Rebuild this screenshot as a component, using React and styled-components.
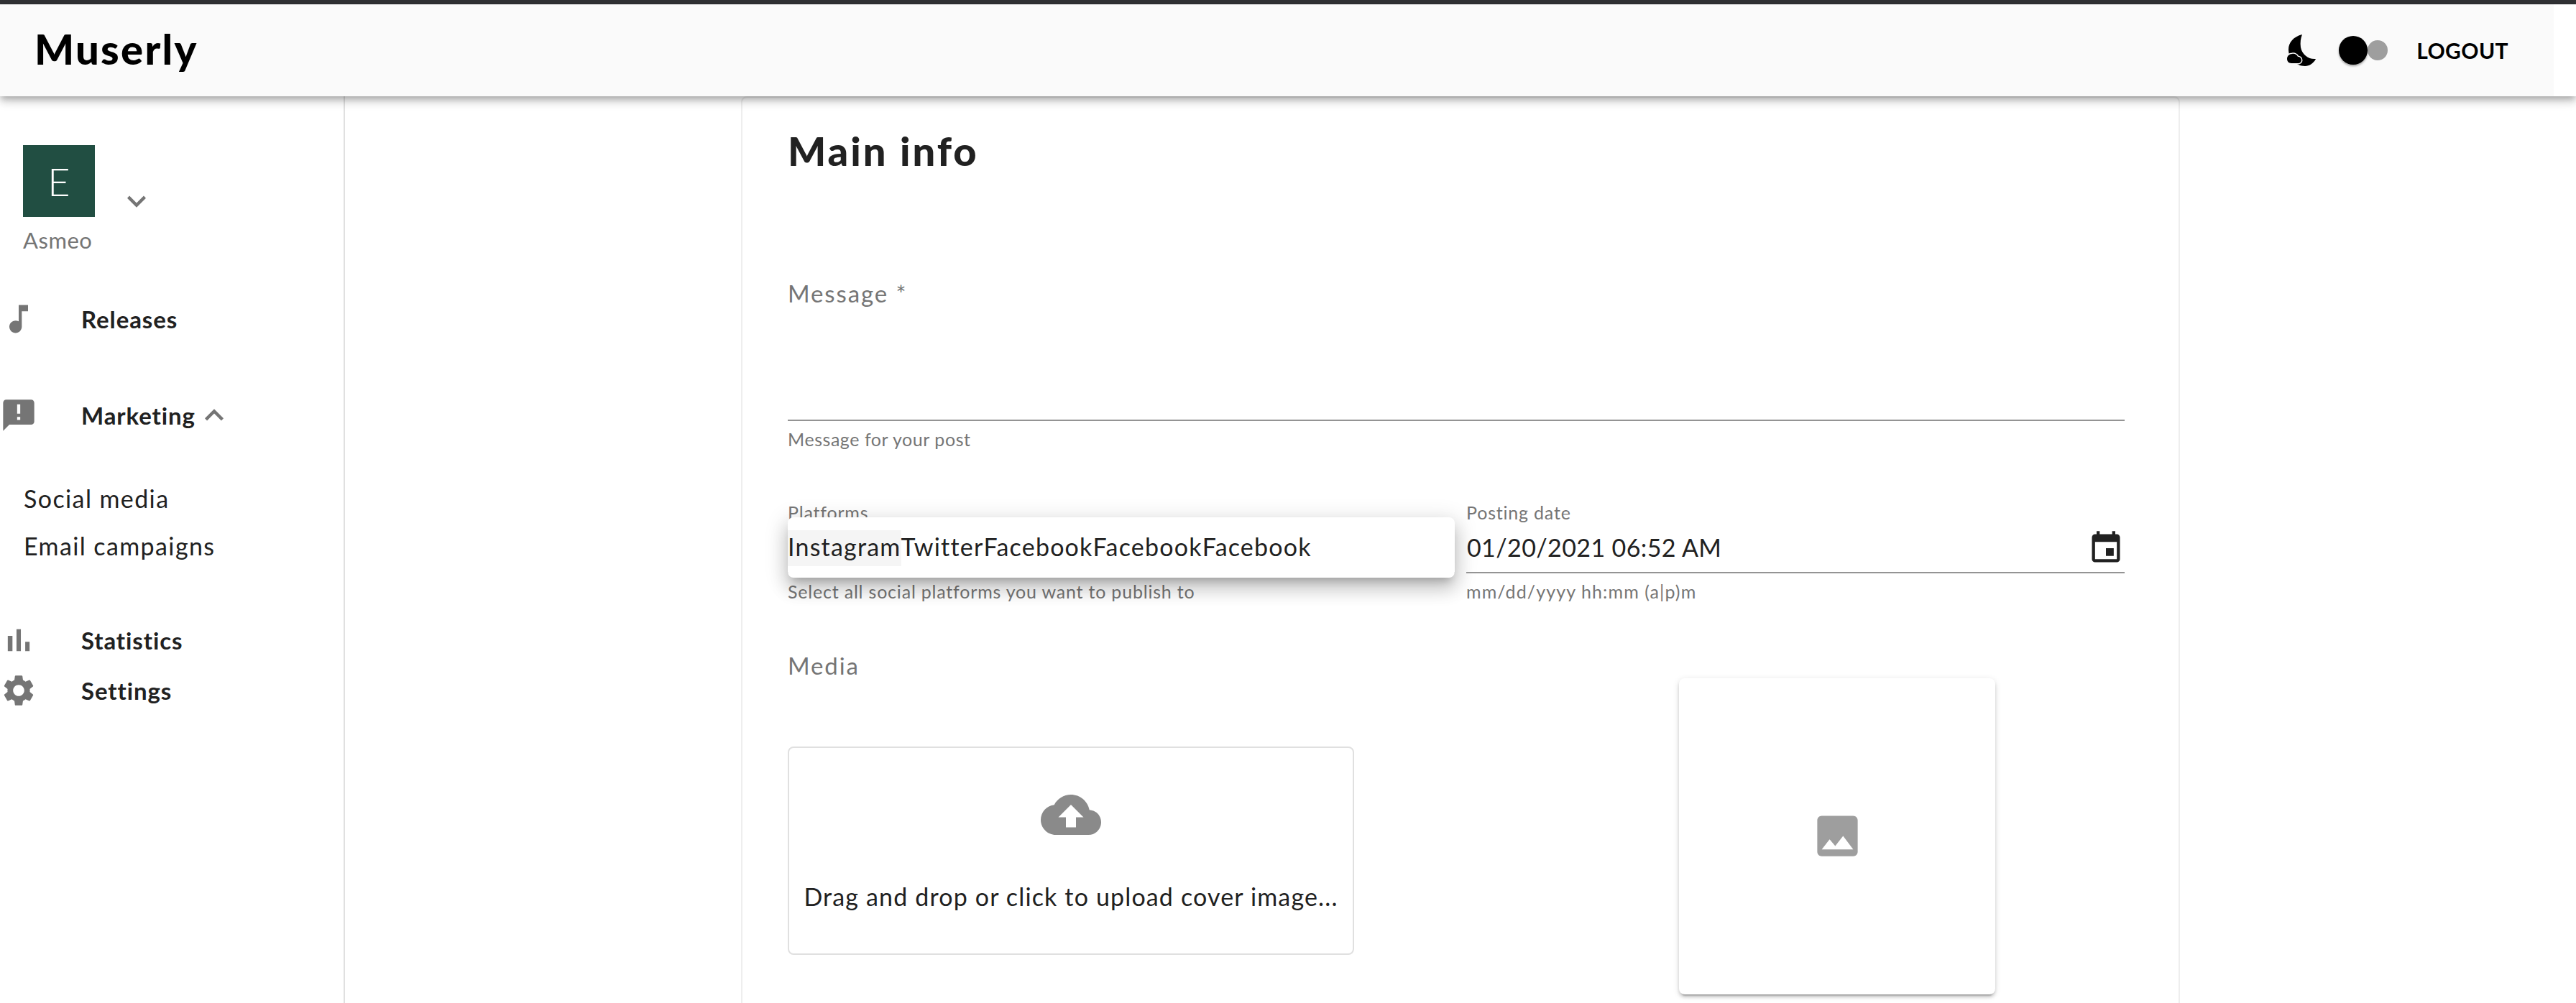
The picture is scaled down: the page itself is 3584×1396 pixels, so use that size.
import React from "react";
import styled, { createGlobalStyle } from "styled-components";

const GlobalStyle = createGlobalStyle`
    html, body {
        margin: 0;
        padding: 0;
        height: 1396px;
        overflow: hidden;
        background: #fff;
        font-family: Lato, "Liberation Sans", sans-serif;
        color: #212121;
    }
`;

const Page = styled.div`
    display: flex;
    flex-direction: column;
    height: 1396px;
    overflow: hidden;
`;

const TopStrip = styled.div`
    height: 6px;
    background: #313235;
    flex: none;
`;

const Header = styled.header`
    flex: none;
    height: 128px;
    background: #fff;
    position: relative;
    z-index: 5;
    box-shadow: 0 4px 8px -2px rgba(0,0,0,.2), 0 8px 10px 0 rgba(0,0,0,.14), 0 2px 20px 0 rgba(0,0,0,.12);
`;

const Toolbar = styled.div`
    width: 3553px;
    height: 128px;
    background: #fafafa;
    display: flex;
    align-items: center;
    padding: 0 63px 0 48px;
    box-sizing: border-box;
`;

const Logo = styled.div`
    font-size: 58px;
    font-weight: 900;
    letter-spacing: 2.3px;
    padding-bottom: 6px;
    color: #000;
    flex: 1;
`;

const MoonIcon = styled.svg`
    width: 40px;
    height: 44px;
    margin-right: 32px;
`;

const Switch = styled.div`
    position: relative;
    width: 68px;
    height: 40px;
    margin-right: 40px;
`;

const SwitchTrack = styled.div`
    position: absolute;
    right: 0;
    top: 6px;
    width: 28px;
    height: 28px;
    border-radius: 14px;
    background: #9e9e9e;
`;

const SwitchThumb = styled.div`
    position: absolute;
    left: 0;
    top: 0;
    width: 40px;
    height: 40px;
    border-radius: 50%;
    background: #000;
    box-shadow: 0 2px 3px rgba(0,0,0,.35);
`;

const LogoutButton = styled.div`
    font-size: 30px;
    font-weight: 700;
    letter-spacing: .4px;
    color: #000;
`;

const Body = styled.div`
    flex: 1;
    display: flex;
    min-height: 0;
`;

const Sidebar = styled.aside`
    width: 480px;
    flex: none;
    box-sizing: border-box;
    border-right: 2px solid #e0e0e0;
    padding-top: 68px;
`;

const AccountRow = styled.div`
    display: flex;
    padding-left: 32px;
    height: 106px;
`;

const Avatar = styled.div`
    width: 100px;
    height: 100px;
    background: #214e42;
    color: #fff;
    display: flex;
    align-items: center;
    justify-content: center;
    font-size: 54px;
    font-weight: 300;
`;

const AccountChevron = styled.div`
    margin: 52px 0 0 32px;
`;

const AccountName = styled.div`
    font-size: 31px;
    line-height: 40px;
    letter-spacing: .5px;
    padding-left: 32px;
    margin-top: 6px;
    color: #757575;
`;

const NavRow = styled.div`
    display: flex;
    align-items: center;
    height: 70px;
    margin-top: ${(p) => p.$top || 0}px;
`;

const NavLabel = styled.div`
    font-size: 33px;
    font-weight: 700;
    letter-spacing: .9px;
    margin-left: 61px;
    color: #212121;
`;

const SubList = styled.div`
    margin-top: 48px;
`;

const SubItem = styled.div`
    font-size: 34px;
    letter-spacing: 1.4px;
    height: 66px;
    line-height: 66px;
    padding-left: 33px;
    color: #212121;
`;

const Main = styled.main`
    flex: 1;
    display: flex;
    justify-content: center;
    min-width: 0;
`;

const Card = styled.section`
    width: 2002px;
    height: 1400px;
    box-sizing: border-box;
    border: 2px solid #eeeeee;
    border-bottom: 0;
    border-radius: 8px 8px 0 0;
    padding: 34px 75px 0 63px;
`;

const Title = styled.h1`
    margin: 0;
    font-size: 56px;
    line-height: 80px;
    font-weight: 900;
    letter-spacing: 3px;
    color: #212121;
`;

const SectionLabel = styled.div`
    font-size: 33px;
    line-height: 44px;
    letter-spacing: 1.9px;
    color: #757575;
    margin-top: ${(p) => p.$top || 0}px;
`;

const MessageInput = styled.div`
    height: 156px;
    box-sizing: border-box;
    border-bottom: 2px solid #949494;
`;

const HelperText = styled.div`
    font-size: 25px;
    line-height: 34px;
    letter-spacing: ${(p) => p.$spacing}px;
    margin-top: 8px;
    color: #757575;
`;

const FieldRow = styled.div`
    display: grid;
    grid-template-columns: 928px 1fr;
    column-gap: 16px;
    margin-top: 68px;
`;

const Field = styled.div`
    position: relative;
`;

const FieldLabel = styled.div`
    font-size: 25px;
    line-height: 34px;
    letter-spacing: .8px;
    color: #757575;
`;

const InputRow = styled.div`
    height: 68px;
    box-sizing: border-box;
    border-bottom: 2px solid #949494;
    display: flex;
    align-items: center;
    justify-content: space-between;
    font-size: 34px;
    color: #212121;
`;

const DateValue = styled.span`
    letter-spacing: .4px;
    margin: 0 0 4px 1px;
`;

const SelectMenu = styled.div`
    position: absolute;
    top: 24px;
    left: 0;
    right: 0;
    height: 84px;
    box-sizing: border-box;
    padding-top: 18px;
    background: #fff;
    border-radius: 8px;
    display: flex;
    align-items: flex-start;
    box-shadow: 0 10px 12px -6px rgba(0,0,0,.2), 0 16px 24px 2px rgba(0,0,0,.14), 0 6px 30px 5px rgba(0,0,0,.12);
`;

const SelectOption = styled.div`
    height: 50px;
    line-height: 46px;
    font-size: 34px;
    letter-spacing: 1.2px;
    color: #212121;
    background: ${(p) => (p.$active ? "#f5f5f5" : "transparent")};
`;

const MediaGrid = styled.div`
    display: grid;
    grid-template-columns: 788px 1fr;
    margin-top: 64px;
`;

const UploadBox = styled.div`
    height: 290px;
    margin-top: 91px;
    box-sizing: border-box;
    border: 2px solid #e0e0e0;
    border-radius: 8px;
    display: flex;
    flex-direction: column;
    align-items: center;
    padding-top: 51px;
`;

const UploadText = styled.div`
    font-size: 34px;
    line-height: 44px;
    letter-spacing: 1.15px;
    margin-top: 50px;
    color: #212121;
`;

const PreviewColumn = styled.div`
    display: flex;
    justify-content: flex-end;
    padding-right: 180px;
`;

const PreviewCard = styled.div`
    width: 440px;
    height: 440px;
    box-sizing: border-box;
    padding-bottom: 2px;
    margin-top: 40px;
    border-radius: 8px;
    background: #fff;
    display: flex;
    align-items: center;
    justify-content: center;
    box-shadow: 0 6px 2px -4px rgba(0,0,0,.2), 0 4px 4px 0 rgba(0,0,0,.14), 0 2px 10px 0 rgba(0,0,0,.12);
`;

const Icon = styled.svg`
    display: block;
    flex: none;
    width: ${(p) => p.$size}px;
    height: ${(p) => p.$size}px;
    fill: ${(p) => p.$color};
`;

const MaterialIcon = ({ d, size = 52, color = "#757575" }) => (
    <Icon viewBox="0 0 24 24" $size={size} $color={color}>
        <path d={d} />
    </Icon>
);

const paths = {
    note: "M12 3v10.55c-.59-.34-1.27-.55-2-.55-2.21 0-4 1.79-4 4s1.79 4 4 4 4-1.79 4-4V7h4V3h-6z",
    announcement: "M20 2H4c-1.1 0-1.99.9-1.99 2L2 22l4-4h14c1.1 0 2-.9 2-2V4c0-1.1-.9-2-2-2zm-7 9h-2V5h2v6zm0 4h-2v-2h2v2z",
    bars: "M5 9.2h3V19H5zM10.6 5h2.8v14h-2.8zm5.6 8H19v6h-2.8z",
    gear: "M19.14 12.94c.04-.3.06-.61.06-.94 0-.32-.02-.64-.07-.94l2.03-1.58c.18-.14.23-.41.12-.61l-1.92-3.32c-.12-.22-.37-.29-.59-.22l-2.39.96c-.5-.38-1.03-.7-1.62-.94l-.36-2.54c-.04-.24-.24-.41-.48-.41h-3.84c-.24 0-.43.17-.47.41l-.36 2.54c-.59.24-1.13.57-1.62.94l-2.39-.96c-.22-.08-.47 0-.59.22L2.74 8.87c-.12.21-.08.47.12.61l2.03 1.58c-.05.3-.09.63-.09.94s.02.64.07.94l-2.03 1.58c-.18.14-.23.41-.12.61l1.92 3.32c.12.22.37.29.59.22l2.39-.96c.5.38 1.03.7 1.62.94l.36 2.54c.05.24.24.41.48.41h3.84c.24 0 .44-.17.47-.41l.36-2.54c.59-.24 1.13-.56 1.62-.94l2.39.96c.22.08.47 0 .59-.22l1.92-3.32c.12-.22.07-.47-.12-.61l-2.01-1.58zM12 15.6c-1.98 0-3.6-1.62-3.6-3.6s1.62-3.6 3.6-3.6 3.6 1.62 3.6 3.6-1.62 3.6-3.6 3.6z",
    expandMore: "M16.59 8.59L12 13.17 7.41 8.59 6 10l6 6 6-6z",
    expandLess: "M12 8l-6 6 1.41 1.41L12 10.83l4.59 4.58L18 14z",
    event: "M17 12h-5v5h5v-5zM16 1v2H8V1H6v2H5c-1.11 0-1.99.9-1.99 2L3 19c0 1.1.89 2 2 2h14c1.1 0 2-.9 2-2V5c0-1.1-.9-2-2-2h-1V1h-2zm3 18H5V8h14v11z",
    cloud: "M19.35 10.04C18.67 6.59 15.64 4 12 4 9.11 4 6.6 5.64 5.35 8.04 2.34 8.36 0 10.91 0 14c0 3.31 2.69 6 6 6h13c2.76 0 5-2.24 5-5 0-2.64-2.05-4.78-4.65-4.96zM14 13v4h-4v-4H7l5-5 5 5h-3z",
    image: "M21 19V5c0-1.1-.9-2-2-2H5c-1.1 0-2 .9-2 2v14c0 1.1.9 2 2 2h14c1.1 0 2-.9 2-2zM8.5 13.5l2.5 3.01L14.5 12l4.5 6H5l3.5-4.5z",
};

const platforms = ["Instagram", "Twitter", "Facebook", "Facebook", "Facebook"];

const App = () => (
    <Page>
        <GlobalStyle />
        <TopStrip />
        <Header>
            <Toolbar>
                <Logo>Muserly</Logo>
                <MoonIcon viewBox="0 0 40 44">
                    <path d="M21 0C9 3 2 11 2 21c0 12 10 23 23 23 6 0 12-4 15-10-10 1-19-6-21-16-1-7 0-13 2-18z" fill="#000" />
                    <path d="M6 40c-4 0-6-3-6-6 0-4 3-7 7-7 3-1 7 1 8 4 3 0 5 2 5 5 0 2-2 4-4 4z" fill="#000" stroke="#fafafa" strokeWidth="3" paintOrder="stroke" />
                </MoonIcon>
                <Switch>
                    <SwitchTrack />
                    <SwitchThumb />
                </Switch>
                <LogoutButton>LOGOUT</LogoutButton>
            </Toolbar>
        </Header>
        <Body>
            <Sidebar>
                <AccountRow>
                    <Avatar>E</Avatar>
                    <AccountChevron>
                        <MaterialIcon d={paths.expandMore} />
                    </AccountChevron>
                </AccountRow>
                <AccountName>Asmeo</AccountName>
                <NavRow $top={55}>
                    <MaterialIcon d={paths.note} />
                    <NavLabel>Releases</NavLabel>
                </NavRow>
                <NavRow $top={64}>
                    <MaterialIcon d={paths.announcement} />
                    <NavLabel>Marketing</NavLabel>
                    <MaterialIcon d={paths.expandLess} />
                </NavRow>
                <SubList>
                    <SubItem>Social media</SubItem>
                    <SubItem>Email campaigns</SubItem>
                </SubList>
                <NavRow $top={63}>
                    <MaterialIcon d={paths.bars} />
                    <NavLabel>Statistics</NavLabel>
                </NavRow>
                <NavRow>
                    <MaterialIcon d={paths.gear} />
                    <NavLabel>Settings</NavLabel>
                </NavRow>
            </Sidebar>
            <Main>
                <Card>
                    <Title>Main info</Title>
                    <SectionLabel $top={136}>Message *</SectionLabel>
                    <MessageInput />
                    <HelperText $spacing={.55}>Message for your post</HelperText>
                    <FieldRow>
                        <Field>
                            <FieldLabel>Platforms</FieldLabel>
                            <InputRow />
                            <HelperText $spacing={.8}>Select all social platforms you want to publish to</HelperText>
                            <SelectMenu>
                                {platforms.map((name, i) => (
                                    <SelectOption key={i} $active={i === 0}>{name}</SelectOption>
                                ))}
                            </SelectMenu>
                        </Field>
                        <Field>
                            <FieldLabel>Posting date</FieldLabel>
                            <InputRow>
                                <DateValue>01/20/2021 06:52 AM</DateValue>
                                <MaterialIcon d={paths.event} color="#212121" />
                            </InputRow>
                            <HelperText $spacing={1.1}>mm/dd/yyyy hh:mm (a|p)m</HelperText>
                        </Field>
                    </FieldRow>
                    <MediaGrid>
                        <div>
                            <SectionLabel>Media</SectionLabel>
                            <UploadBox>
                                <MaterialIcon d={paths.cloud} size={84} color="#8a8a8a" />
                                <UploadText>Drag and drop or click to upload cover image...</UploadText>
                            </UploadBox>
                        </div>
                        <PreviewColumn>
                            <PreviewCard>
                                <MaterialIcon d={paths.image} size={75} color="#9e9e9e" />
                            </PreviewCard>
                        </PreviewColumn>
                    </MediaGrid>
                </Card>
            </Main>
        </Body>
    </Page>
);

export default App;
